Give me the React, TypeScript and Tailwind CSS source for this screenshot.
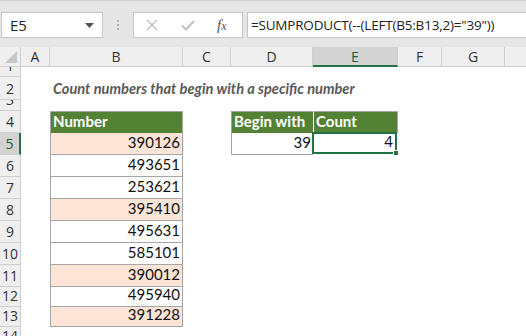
import React from "react";

const cols = [
  { key: "A", w: 29 },
  { key: "B", w: 133 },
  { key: "C", w: 48 },
  { key: "D", w: 82 },
  { key: "E", w: 85 },
  { key: "F", w: 44 },
  { key: "G", w: 63 },
  { key: "H", w: 64 },
];

const rowHeights = [10, 23, 11, 22, 22, 22, 22, 22, 22, 22, 22, 20, 20, 20];

const numbers = [
  { v: "390126", hit: true },
  { v: "493651", hit: false },
  { v: "253621", hit: false },
  { v: "395410", hit: true },
  { v: "495631", hit: false },
  { v: "585101", hit: false },
  { v: "390012", hit: true },
  { v: "495940", hit: false },
  { v: "391228", hit: true },
];

const cellFont = { fontFamily: "Lato, 'Open Sans', sans-serif" };

function FormulaBar() {
  return (
    <div className="flex h-[47px] items-start border-t border-[#d0d0d0] bg-[#e6e6e6] pt-[11px]">
      {/* Name box */}
      <div className="ml-px flex h-[26px] w-[102px] items-center justify-between border border-[#c6c6c6] bg-white pl-2 pr-[8px]">
        <span className="text-[15px] text-[#222]" style={{ fontFamily: "'Open Sans', sans-serif" }}>
          E5
        </span>
        <svg width="9" height="5" viewBox="0 0 9 5">
          <path d="M0 0h9L4.5 5z" fill="#555" />
        </svg>
      </div>
      <div className="flex h-[26px] w-[30px] flex-col items-center justify-center gap-[2px]">
        <span className="h-[2px] w-[2px] bg-[#b0b0b0]" />
        <span className="h-[2px] w-[2px] bg-[#b0b0b0]" />
        <span className="h-[2px] w-[2px] bg-[#b0b0b0]" />
      </div>
      {/* Cancel / enter / fx */}
      <div className="flex h-[26px] w-[110px] items-center border border-[#c6c6c6] bg-white">
        <svg className="ml-[12px]" width="12" height="12" viewBox="0 0 12 12">
          <path d="M1 1l10 10M11 1L1 11" stroke="#c4c4c4" strokeWidth="1.6" />
        </svg>
        <svg className="ml-[23px]" width="14" height="11" viewBox="0 0 14 11">
          <path d="M1 5.5l4 4L13 1" stroke="#c4c4c4" strokeWidth="2.2" fill="none" />
        </svg>
        <span
          className="ml-[22px] text-[15px] italic text-[#555]"
          style={{ fontFamily: "'Liberation Serif', serif" }}
        >
          f<span className="text-[12px]">x</span>
        </span>
      </div>
      <div className="ml-[4px] flex h-[26px] min-w-0 flex-1 items-center overflow-hidden border border-r-0 border-[#c6c6c6] bg-white pl-[3px]">
        <span
          className="whitespace-nowrap text-[13.5px] tracking-[-0.2px] text-[#222]"
          style={{ fontFamily: "'Open Sans', sans-serif" }}
        >
          =SUMPRODUCT(--(LEFT(B5:B13,2)="39"))
        </span>
      </div>
    </div>
  );
}

function ColumnHeaders() {
  return (
    <div className="flex h-[20px] bg-[#efefef]" style={{ fontFamily: "'Open Sans', sans-serif" }}>
      <div className="relative h-[20px] w-[21px] shrink-0 border-r border-b border-[#cfcfcf]">
        <svg className="absolute right-[3px] bottom-[3px]" width="12" height="12" viewBox="0 0 12 12">
          <path d="M12 0v12H0z" fill="#c7c7c7" />
        </svg>
      </div>
      {cols.map((c) => {
        const sel = c.key === "E";
        return (
          <div
            key={c.key}
            className={
              sel
                ? "flex h-[20px] shrink-0 items-center justify-center border-r border-b-2 border-r-[#cfcfcf] border-b-[#217346] bg-[#d3d3d3] text-[14px] text-[#1e5e38]"
                : "flex h-[20px] shrink-0 items-center justify-center border-r border-b border-[#cfcfcf] text-[14px] text-[#333]"
            }
            style={{ width: c.w }}
          >
            {c.key}
          </div>
        );
      })}
    </div>
  );
}

function Cell({
  w,
  className = "",
  children,
}: {
  w: number;
  className?: string;
  children?: React.ReactNode;
}) {
  return (
    <div className={"box-border h-full shrink-0 " + className} style={{ width: w }}>
      {children}
    </div>
  );
}

function RowContent({ r }: { r: number }) {
  // r is the 1-based row number
  const A = <Cell w={29} />;
  let B: React.ReactNode = <Cell w={133} />;
  let D: React.ReactNode = <Cell w={82} />;
  let E: React.ReactNode = <Cell w={85} />;
  let wide: React.ReactNode = null;

  if (r === 2) {
    wide = (
      <div
        className="flex h-full items-center whitespace-nowrap pl-[3px] text-[14.6px] font-bold italic text-[#595959]"
        style={cellFont}
      >
        Count numbers that begin with a specific number
      </div>
    );
  }
  if (r === 4) {
    B = (
      <Cell w={133} className="flex items-end border-x border-t border-[#a6a6a6] bg-[#548235] pb-[1px] pl-[2px]">
        <span className="text-[15px] font-bold text-white" style={cellFont}>
          Number
        </span>
      </Cell>
    );
    D = (
      <Cell w={82} className="flex items-end border-t border-l border-[#a6a6a6] bg-[#548235] pb-[1px] pl-[2px]">
        <span className="text-[15px] font-bold text-white" style={cellFont}>
          Begin with
        </span>
      </Cell>
    );
    E = (
      <Cell w={85} className="flex items-end border-x border-t border-[#a6a6a6] border-l-white bg-[#548235] pb-[1px] pl-[2px]">
        <span className="text-[15px] font-bold text-white" style={cellFont}>
          Count
        </span>
      </Cell>
    );
  }
  if (r >= 5 && r <= 13) {
    const n = numbers[r - 5];
    B = (
      <Cell
        w={133}
        className={
          (n.hit ? "bg-[#fce4d6] " : "bg-white ") +
          "flex items-end justify-end border-x border-b border-[#a6a6a6] pr-[2px] pb-[1px]"
        }
      >
        <span className="text-[15px] text-[#111]" style={cellFont}>
          {n.v}
        </span>
      </Cell>
    );
  }
  if (r === 5) {
    D = (
      <Cell w={82} className="flex items-end justify-end border-b border-l border-[#a6a6a6] pr-[2px] pb-[1px]">
        <span className="text-[15px] text-[#111]" style={cellFont}>
          39
        </span>
      </Cell>
    );
    E = (
      <Cell w={85} className="relative -mt-px -ml-px flex h-[23px] items-end justify-end border-2 border-[#217346] pr-[2px]">
        <span className="text-[15px] text-[#111]" style={cellFont}>
          4
        </span>
        <span className="absolute -right-[4px] -bottom-[4px] h-[6px] w-[6px] border border-white bg-[#217346]" />
      </Cell>
    );
  }

  return (
    <div className="flex h-full">
      {A}
      {wide ?? (
        <>
          {B}
          <Cell w={48} />
          {D}
          {E}
        </>
      )}
    </div>
  );
}

function Sheet() {
  return (
    <div className="flex flex-col bg-white">
      {rowHeights.map((h, i) => {
        const r = i + 1;
        const sel = r === 5;
        return (
          <div key={r} className="flex overflow-visible" style={{ height: h }}>
            <div
              className={
                sel
                  ? "flex h-full w-[21px] shrink-0 items-end justify-center overflow-hidden border-r-2 border-b border-r-[#217346] border-b-[#cfcfcf] bg-[#d3d3d3] text-[14px] leading-[20px] text-[#1e5e38]"
                  : "flex h-full w-[21px] shrink-0 items-end justify-center overflow-hidden border-r border-b border-[#cfcfcf] bg-[#efefef] text-[14px] leading-[20px] text-[#333]"
              }
              style={{ fontFamily: "'Open Sans', sans-serif" }}
            >
              {r}
            </div>
            <RowContent r={r} />
          </div>
        );
      })}
    </div>
  );
}

export default function App() {
  return (
    <div className="h-[336px] w-[526px] overflow-hidden bg-white">
      <FormulaBar />
      <ColumnHeaders />
      <Sheet />
    </div>
  );
}
